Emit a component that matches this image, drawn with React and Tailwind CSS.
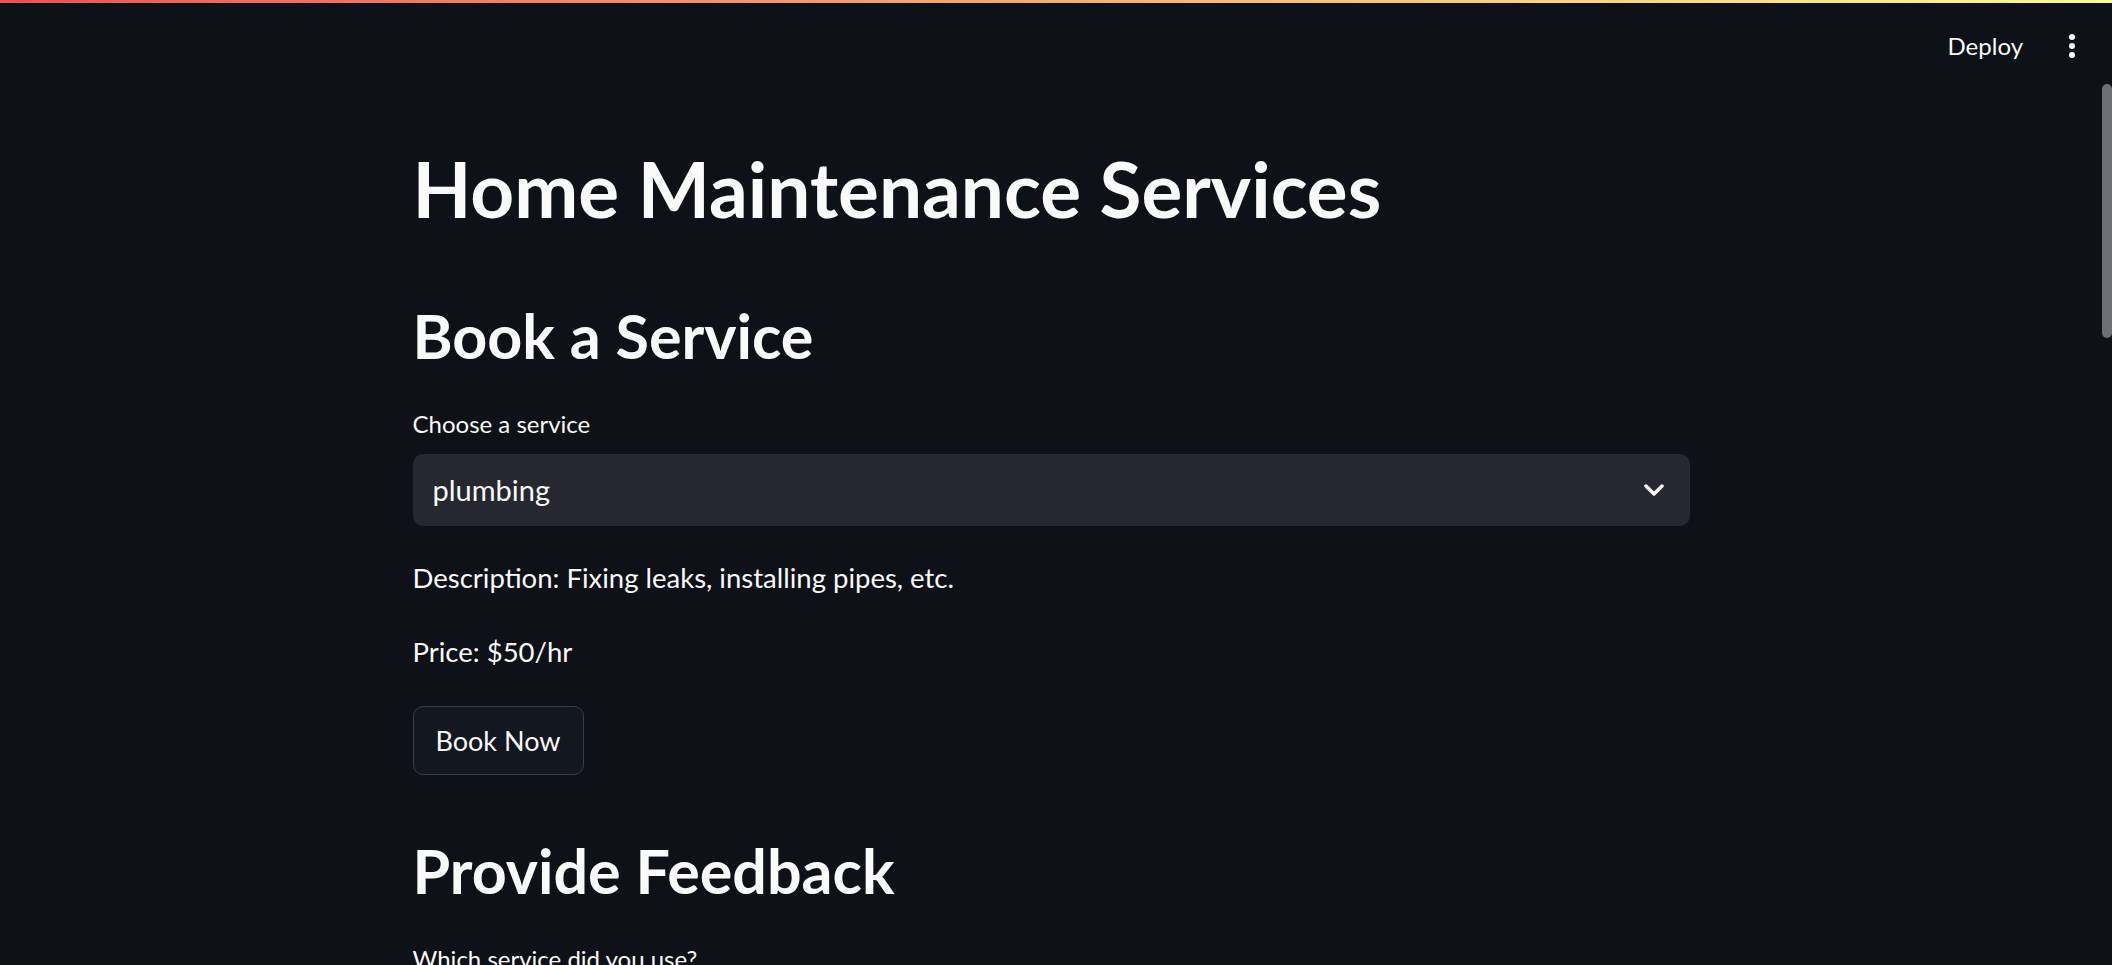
import React, { useState } from 'react';

const font = { fontFamily: 'Lato, "Noto Sans", sans-serif' };

const services = {
  plumbing: { description: 'Fixing leaks, installing pipes, etc.', price: '$50/hr' },
};

const Header = () => (
  <div className="flex h-[85px] items-center justify-end gap-[46px] pr-[27px]">
    <button className="text-[24px] text-[#fafafa]">Deploy</button>
    <div className="flex flex-col items-center gap-[3px]">
      <span className="h-[6px] w-[6px] rounded-full bg-[#fafafa]" />
      <span className="h-[6px] w-[6px] rounded-full bg-[#fafafa]" />
      <span className="h-[6px] w-[6px] rounded-full bg-[#fafafa]" />
    </div>
  </div>
);

const App = () => {
  const [service] = useState('plumbing');
  const info = services[service];

  return (
    <div className="h-[965px] overflow-hidden bg-[#0e1117] text-[#fafafa]" style={font}>
      {/* top decoration */}
      <div className="h-[3px] bg-gradient-to-r from-[#ff4b4b] to-[#fffd80]" />

      <div className="flex">
        <div className="flex-1">
          <Header />

          <div className="mx-auto w-[1277px]">
            <h1 className="mt-[56px] text-[76.5px] font-bold leading-[88px]">Home Maintenance Services</h1>

            <h2 className="mt-[69px] text-[61px] font-bold leading-[70px]">Book a Service</h2>

            <label className="mt-[39px] block text-[24px] leading-[28px]">Choose a service</label>
            <div className="mt-[16px] flex h-[72px] items-center justify-between rounded-[10px] bg-[#262730] pl-[20px] pr-[26px]">
              <span className="text-[29px]">{service}</span>
              <svg width="20" height="12" viewBox="0 0 20 12" fill="none">
                <path d="M2 2l8 8 8-8" stroke="#fafafa" strokeWidth="3.5" strokeLinecap="round" strokeLinejoin="round" />
              </svg>
            </div>

            <p className="mt-[35px] text-[27.5px] leading-[34px]">Description: {info.description}</p>
            <p className="mt-[40px] text-[27.5px] leading-[34px]">Price: {info.price}</p>

            <button className="mt-[37px] h-[69px] rounded-[10px] border border-[#3b3d46] bg-[#13171f] px-[22px] text-[27px] leading-[34px]">
              Book Now
            </button>

            <h2 className="mt-[61px] text-[61px] font-bold leading-[70px]">Provide Feedback</h2>
            <label className="mt-[39px] block text-[24px] leading-[28px]">Which service did you use?</label>
          </div>
        </div>

        {/* scrollbar */}
        <div className="w-[10px]">
          <div className="mt-[81px] h-[254px] rounded-[5px] bg-[#6e6f73]" />
        </div>
      </div>
    </div>
  );
};

export default App;
